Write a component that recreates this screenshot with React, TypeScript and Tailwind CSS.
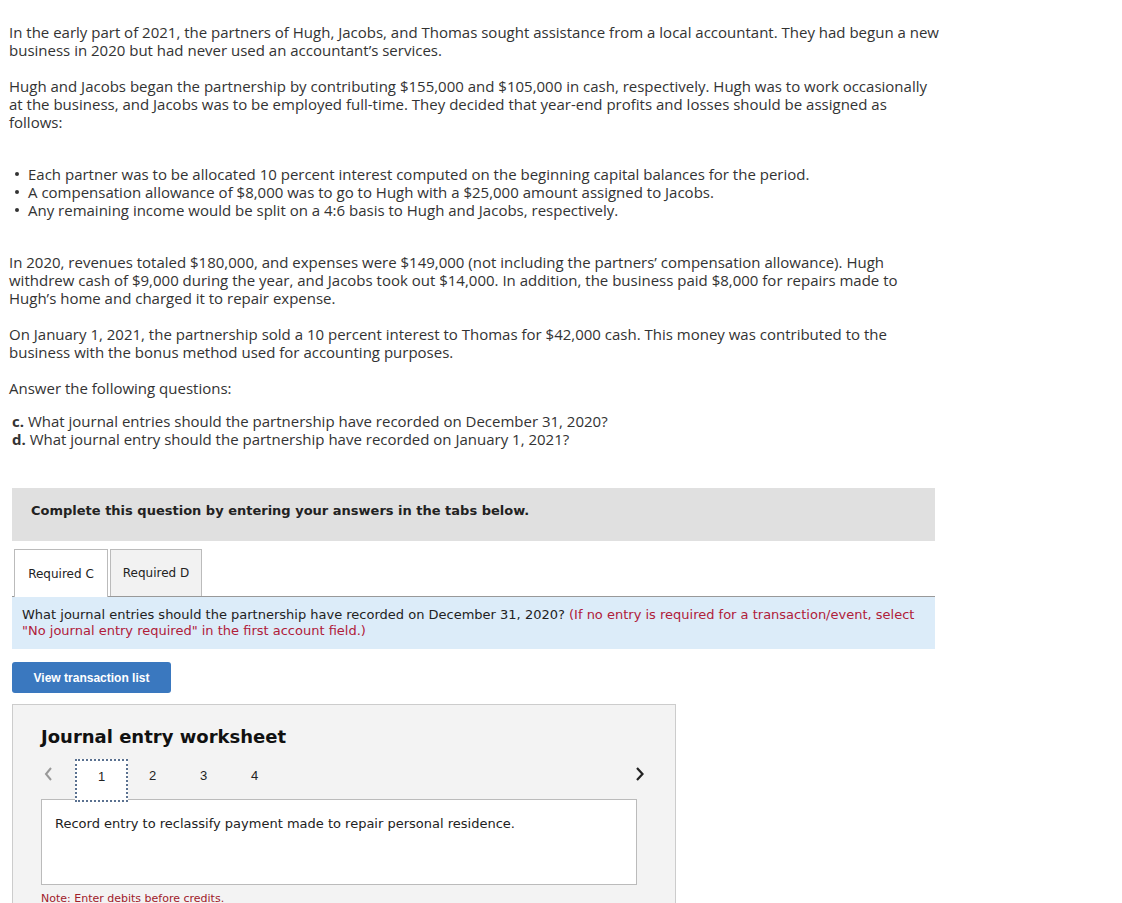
const bullets = [
  "Each partner was to be allocated 10 percent interest computed on the beginning capital balances for the period.",
  "A compensation allowance of $8,000 was to go to Hugh with a $25,000 amount assigned to Jacobs.",
  "Any remaining income would be split on a 4:6 basis to Hugh and Jacobs, respectively.",
];

export default function App() {
  return (
    <div className="min-h-[903px] bg-white">
      <div className="w-[1000px] pl-[9px] pt-[23px] text-[15px] leading-[18px] text-[#333]" style={{ fontFamily: '"Open Sans", sans-serif' }}>
        <p>
          In the early part of 2021, the partners of Hugh, Jacobs, and Thomas sought assistance from a local accountant. They had begun a new
          <br />
          business in 2020 but had never used an accountant’s services.
        </p>
        <p className="mt-[18px]">
          Hugh and Jacobs began the partnership by contributing $155,000 and $105,000 in cash, respectively. Hugh was to work occasionally
          <br />
          at the business, and Jacobs was to be employed full-time. They decided that year-end profits and losses should be assigned as
          <br />
          follows:
        </p>
        <ul className="mt-[34px]">
          {bullets.map((b) => (
            <li key={b} className="flex items-center">
              <span className="ml-[6px] mr-[9px] h-[4px] w-[4px] rounded-full bg-[#333]" />
              {b}
            </li>
          ))}
        </ul>
        <p className="mt-[34px]">
          In 2020, revenues totaled $180,000, and expenses were $149,000 (not including the partners’ compensation allowance). Hugh
          <br />
          withdrew cash of $9,000 during the year, and Jacobs took out $14,000. In addition, the business paid $8,000 for repairs made to
          <br />
          Hugh’s home and charged it to repair expense.
        </p>
        <p className="mt-[18px]">
          On January 1, 2021, the partnership sold a 10 percent interest to Thomas for $42,000 cash. This money was contributed to the
          <br />
          business with the bonus method used for accounting purposes.
        </p>
        <p className="mt-[18px]">Answer the following questions:</p>
        <div className="mt-[15px] pl-[3px]">
          <p><b className="font-bold">c.</b> What journal entries should the partnership have recorded on December 31, 2020?</p>
          <p><b className="font-bold">d.</b> What journal entry should the partnership have recorded on January 1, 2021?</p>
        </div>
      </div>

      <div className="ml-[12px] w-[923px]" style={{ fontFamily: '"DejaVu Sans", Verdana, sans-serif' }}>
        <div className="mt-[40px] flex h-[53px] items-center bg-[#e0e0e0] pb-[7px] pl-[19px] text-[13px] font-bold text-[#222]">
          Complete this question by entering your answers in the tabs below.
        </div>

        <div className="mt-[8px] flex border-b border-[#999] pl-[2px] text-[12px] text-[#222]">
          <div className="-mb-px flex h-[48px] w-[94px] items-center justify-center border border-b-0 border-[#bbb] bg-white">
            Required C
          </div>
          <div className="ml-[2px] flex h-[47px] w-[92px] items-center justify-center border border-b-0 border-[#bbb] bg-[#f2f2f2]">
            Required D
          </div>
        </div>

        <div className="bg-[#dcecf9] px-[10px] pb-[10px] pt-[10px] text-[13px] leading-[16px] text-[#222]">
          What journal entries should the partnership have recorded on December 31, 2020?{" "}
          <span className="text-[#b0203a]">
            (If no entry is required for a transaction/event, select "No journal entry required" in the first account field.)
          </span>
        </div>

        <button
          className="mt-[13px] flex h-[31px] w-[159px] items-center justify-center rounded-[3px] bg-[#3a78bf] text-[12px] font-bold text-white"
          style={{ fontFamily: '"Liberation Sans", Arial, sans-serif' }}
        >
          View transaction list
        </button>

        <div className="mt-[11px] h-[210px] w-[664px] border border-b-0 border-[#ccc] bg-[#f3f3f3] px-[28px] pt-[20px]">
          <h2 className="text-[18px] font-bold leading-[24px] text-[#111]">Journal entry worksheet</h2>
          <div className="mt-[10px] flex items-start" style={{ fontFamily: '"Liberation Sans", Arial, sans-serif' }}>
            <svg className="ml-[2px] mr-[22px] mt-[7px]" width="10" height="16" viewBox="0 0 10 16">
              <path d="M8 2 L3 8 L8 14" fill="none" stroke="#999" strokeWidth="2" />
            </svg>
            <div className="relative z-10 -mb-px flex h-[43px] w-[53px] items-start justify-center border-2 border-dotted border-[#5a7190] bg-white pt-[6px] text-[13px] text-[#222]">
              1
            </div>
            <span className="ml-[21px] mt-[7px] w-[51px] text-[13px] text-[#222]">2</span>
            <span className="mt-[7px] w-[51px] text-[13px] text-[#222]">3</span>
            <span className="mt-[7px] text-[13px] text-[#222]">4</span>
            <svg className="ml-auto mr-[2px] mt-[7px]" width="10" height="16" viewBox="0 0 10 16">
              <path d="M2 2 L7.5 8 L2 14" fill="none" stroke="#222" strokeWidth="2.2" />
            </svg>
          </div>
          <div className="-mt-[2px] h-[86px] w-[596px] border border-[#bbb] bg-white px-[13px] pt-[14px] text-[13px] text-[#222]">
            Record entry to reclassify payment made to repair personal residence.
          </div>
          <p className="mt-[6px] text-[11px] text-[#a0202a]">Note: Enter debits before credits.</p>
        </div>
      </div>
    </div>
  );
}
